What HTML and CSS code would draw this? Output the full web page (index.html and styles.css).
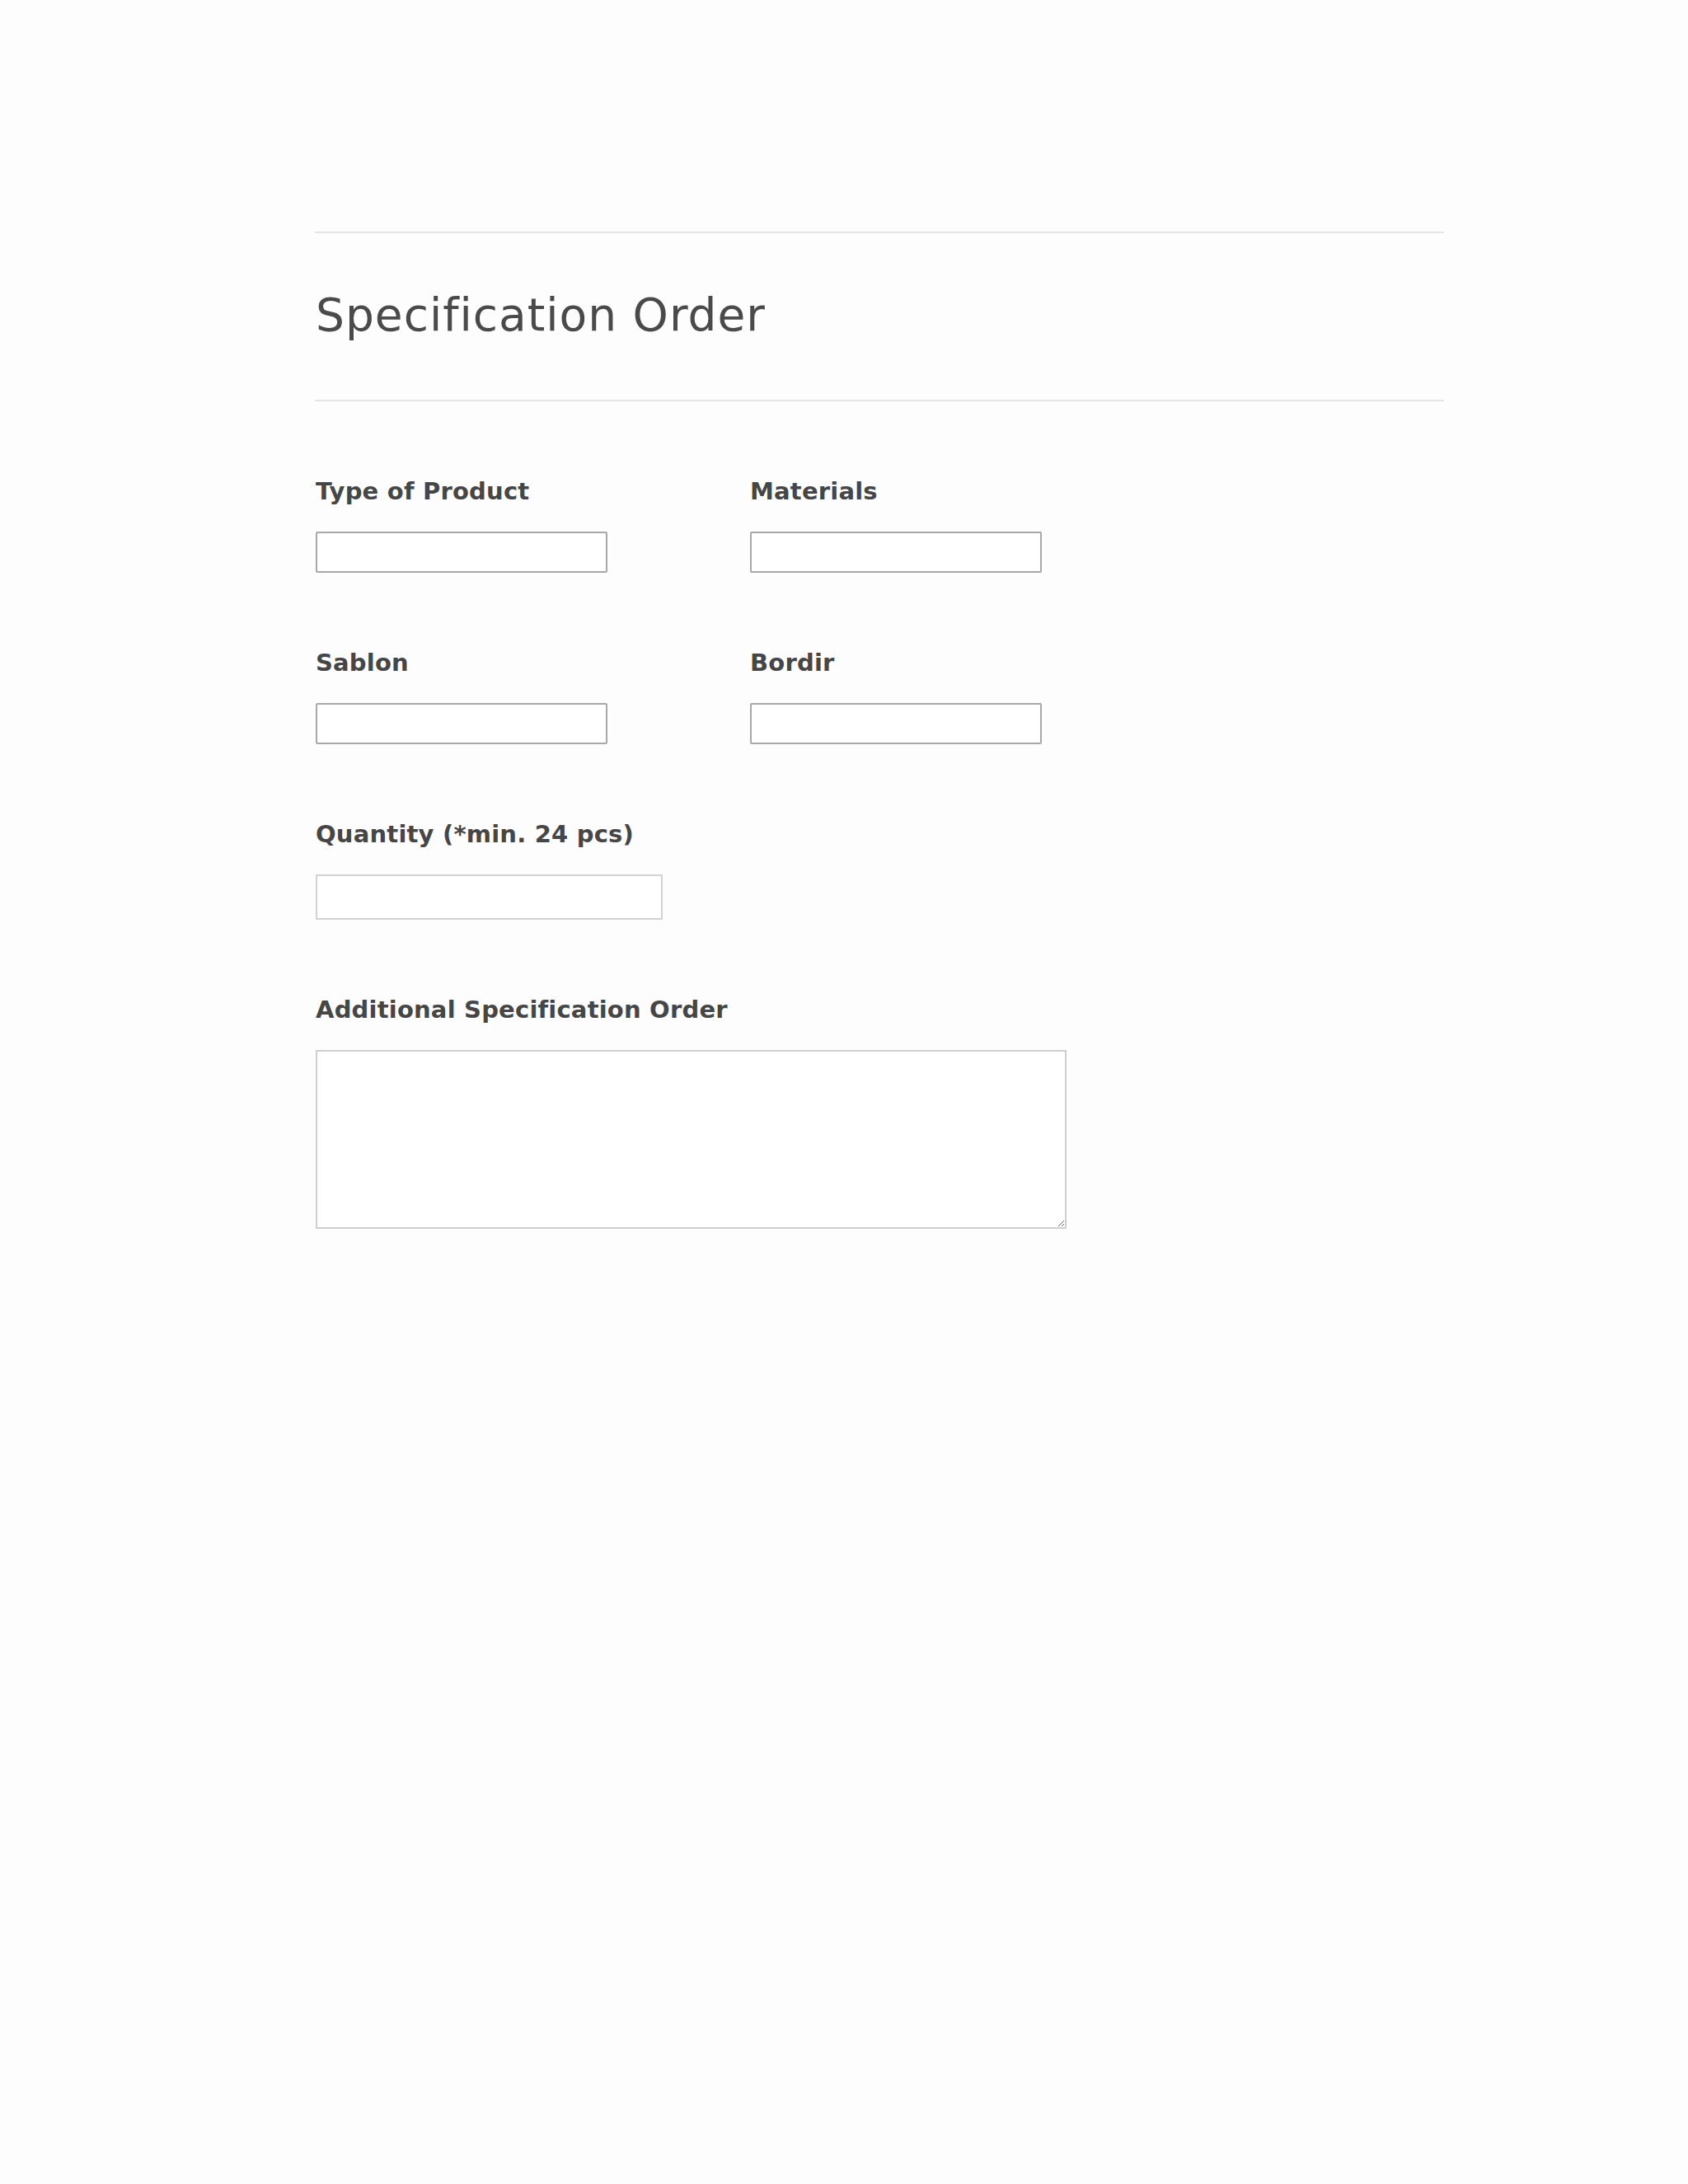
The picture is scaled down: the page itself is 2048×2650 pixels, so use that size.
FILE: index.html
```html
<!DOCTYPE html>
<html lang="en">
<head>
<meta charset="utf-8">
<title>Specification Order</title>
<link rel="stylesheet" href="styles.css">
</head>
<body>
<main class="form">
  <header class="form-header">
    <h1 class="form-title">Specification Order</h1>
  </header>
  <div class="form-body">
    <div class="row row-two">
      <div class="field">
        <label class="label" for="type">Type of Product</label>
        <input class="input input-dark" id="type" type="text">
      </div>
      <div class="field">
        <label class="label" for="materials">Materials</label>
        <input class="input input-dark" id="materials" type="text">
      </div>
    </div>
    <div class="row row-two">
      <div class="field">
        <label class="label" for="sablon">Sablon</label>
        <input class="input input-dark" id="sablon" type="text">
      </div>
      <div class="field">
        <label class="label" for="bordir">Bordir</label>
        <input class="input input-dark" id="bordir" type="text">
      </div>
    </div>
    <div class="row">
      <div class="field">
        <label class="label" for="qty">Quantity (*min. 24 pcs)</label>
        <input class="input input-light" id="qty" type="text">
      </div>
    </div>
    <div class="row">
      <div class="field">
        <label class="label" for="additional">Additional Specification Order</label>
        <textarea class="textarea" id="additional"></textarea>
      </div>
    </div>
  </div>
</main>
</body>
</html>
```

FILE: styles.css
```css
html, body {
  margin: 0;
  padding: 0;
  background: #fdfdfd;
}

body {
  font-family: "DejaVu Sans", "Open Sans", sans-serif;
  color: #474747;
}

.form {
  width: 1370px;
  margin-left: 382px;
  padding-top: 281px;
}

.form-header {
  border-top: 2px solid #e6e6e6;
  border-bottom: 2px solid #e6e6e6;
  padding: 62px 0 66px;
}

.form-title {
  margin: 0 0 0 1px;
  font-size: 55px;
  line-height: 74px;
  font-weight: 400;
  letter-spacing: 1px;
  color: #4a4a4a;
}

.form-body {
  padding-top: 89px;
  padding-left: 1px;
}

.row {
  display: flex;
  margin-bottom: 89px;
}

.row-two {
  display: grid;
  grid-template-columns: 354px 354px;
  column-gap: 173px;
}

.field {
  display: flex;
  flex-direction: column;
  align-items: flex-start;
}

.label {
  font-size: 29px;
  line-height: 40px;
  font-weight: 700;
  letter-spacing: 0.2px;
  color: #464646;
  margin-bottom: 29px;
}

.input {
  box-sizing: border-box;
  margin: 0;
  padding: 0 8px;
  background: #ffffff;
  font: inherit;
  outline: none;
}

.input-dark {
  width: 354px;
  height: 50px;
  border: 2px solid #a8a8a8;
  border-radius: 2px;
}

.input-light {
  width: 421px;
  height: 55px;
  border: 2px solid #d2d2d2;
  border-radius: 0;
}

.textarea {
  box-sizing: border-box;
  width: 911px;
  height: 217px;
  margin: 0;
  border: 2px solid #cfcfcf;
  border-radius: 0;
  background: #ffffff;
  font: inherit;
  outline: none;
}
```
